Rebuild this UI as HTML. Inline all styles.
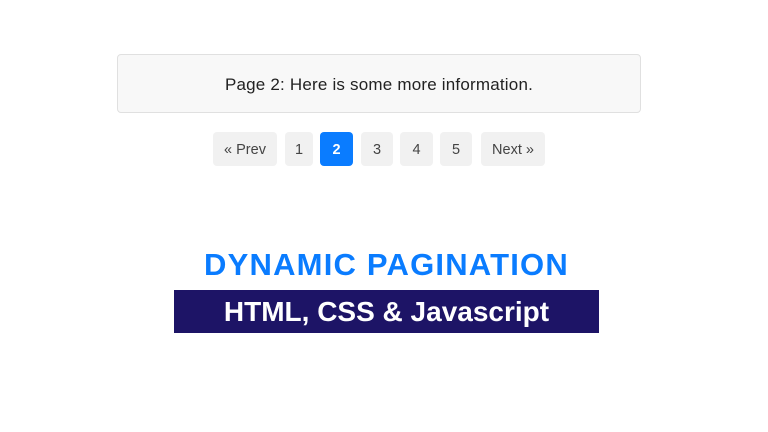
<!DOCTYPE html>
<html><head><style>
body{margin:0;width:768px;height:432px;background:#fff;font-family:"Liberation Sans",sans-serif;position:relative;overflow:hidden}
.card{position:absolute;left:117px;top:54px;width:524px;height:59px;background:#f8f8f8;border:1px solid #e0e0e0;border-radius:4px;box-sizing:border-box;text-align:center;line-height:59px;font-size:17px;color:#222;letter-spacing:0.2px}
.b{position:absolute;top:132px;height:34px;background:#f1f1f1;border-radius:4px;text-align:center;line-height:36px;font-size:14.5px;color:#444}
.a{background:#0a7cff;color:#fff;font-weight:bold}
.t{position:absolute;left:0;width:773px;top:247px;text-align:center;color:#0a7cff;font-weight:bold;font-size:31px;letter-spacing:1.2px}
.ban{position:absolute;left:174px;top:290px;width:425px;height:43px;background:#1d1466;color:#fff;font-weight:bold;font-size:28px;text-align:center;line-height:43px;letter-spacing:0}
</style></head><body>
<div class="card">Page 2: Here is some more information.</div>
<div class="b" style="left:213px;width:64px">« Prev</div>
<div class="b" style="left:285px;width:28px">1</div>
<div class="b a" style="left:320px;width:33px">2</div>
<div class="b" style="left:361px;width:32px">3</div>
<div class="b" style="left:400px;width:33px">4</div>
<div class="b" style="left:440px;width:32px">5</div>
<div class="b" style="left:481px;width:64px">Next »</div>
<div class="t">DYNAMIC PAGINATION</div>
<div class="ban">HTML, CSS &amp; Javascript</div>
</body></html>
